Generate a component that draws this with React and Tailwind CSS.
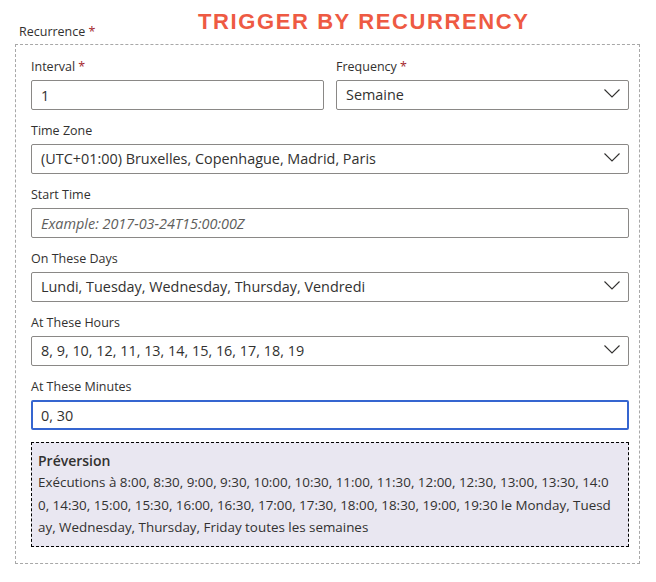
import React from 'react';

function Chevron() {
    return (
        <svg width="16" height="9" viewBox="0 0 16 9" className="mb-[4px] shrink-0">
            <polyline points="0.5,0.5 8,8 15.5,0.5" fill="none" stroke="#323130" strokeWidth="1.1" />
        </svg>
    );
}

function Label({ children, required }) {
    return (
        <div className="h-[16px] mb-[6px] pt-[1px] text-[12.5px] leading-[16px] text-[#323130]">
            {children}
            {required && <span className="text-[#a4262c]"> *</span>}
        </div>
    );
}

function TextField({ label, required, value, placeholder, focused }) {
    return (
        <div className="flex flex-col">
            <Label required={required}>{label}</Label>
            <input
                readOnly
                value={value}
                placeholder={placeholder}
                className={
                    focused
                        ? 'h-[30px] w-full rounded-[2px] border-2 border-[#3565d0] bg-white pl-[8px] text-[14.4px] text-[#323130] outline-none'
                        : 'h-[30px] w-full rounded-[2px] border border-[#8a8886] bg-white pl-[9px] text-[14.4px] text-[#323130] outline-none placeholder:italic placeholder:text-[#605e5c]'
                }
            />
        </div>
    );
}

function Dropdown({ label, required, value }) {
    return (
        <div className="flex flex-col">
            <Label required={required}>{label}</Label>
            <div className="flex h-[30px] items-center justify-between rounded-[2px] border border-[#8a8886] bg-white pl-[9px] pr-[8px] text-[14.4px] text-[#323130]">
                <span className="truncate">{value}</span>
                <Chevron />
            </div>
        </div>
    );
}

export default function App() {
    return (
        <div className="h-[582px] w-[656px] bg-white font-['Open_Sans',sans-serif]">
            <div className="flex h-[44px]">
                <div className="w-[198px] self-end pb-[4px] pl-[19px] text-[12.5px] leading-[16px] text-[#323130]">
                    Recurrence<span className="text-[#a4262c]"> *</span>
                </div>
                <div className="pt-[10px] font-['Liberation_Sans',Arial,sans-serif] text-[22px] font-bold leading-[24px] tracking-[1.6px] text-[#ee5a43]">
                    TRIGGER BY RECURRENCY
                </div>
            </div>

            <div className="ml-[15px] w-[625px] border border-dashed border-[#a8a8a8] pb-[16px] pl-[15px] pr-[10px] pt-[13px]">
                <div className="flex flex-col gap-[12px]">
                    <div className="grid grid-cols-2 gap-[12px]">
                        <TextField label="Interval" required value="1" />
                        <Dropdown label="Frequency" required value="Semaine" />
                    </div>
                    <Dropdown label="Time Zone" value="(UTC+01:00) Bruxelles, Copenhague, Madrid, Paris" />
                    <TextField label="Start Time" value="" placeholder="Example: 2017-03-24T15:00:00Z" />
                    <Dropdown label="On These Days" value="Lundi, Tuesday, Wednesday, Thursday, Vendredi" />
                    <Dropdown label="At These Hours" value="8, 9, 10, 12, 11, 13, 14, 15, 16, 17, 18, 19" />
                    <TextField label="At These Minutes" value="0, 30" focused />

                    <div className="border border-dashed border-black bg-[#e9e7f1] px-[6px] pb-[7px] pt-[8px] text-[#323130]">
                        <div className="text-[14px] font-semibold leading-[20px]">Préversion</div>
                        <div className="text-[13.4px] leading-[22.5px]">
                            <div className="whitespace-nowrap">Exécutions à 8:00, 8:30, 9:00, 9:30, 10:00, 10:30, 11:00, 11:30, 12:00, 12:30, 13:00, 13:30, 14:0</div>
                            <div className="whitespace-nowrap">0, 14:30, 15:00, 15:30, 16:00, 16:30, 17:00, 17:30, 18:00, 18:30, 19:00, 19:30 le Monday, Tuesd</div>
                            <div className="whitespace-nowrap">ay, Wednesday, Thursday, Friday toutes les semaines</div>
                        </div>
                    </div>
                </div>
            </div>
        </div>
    );
}
